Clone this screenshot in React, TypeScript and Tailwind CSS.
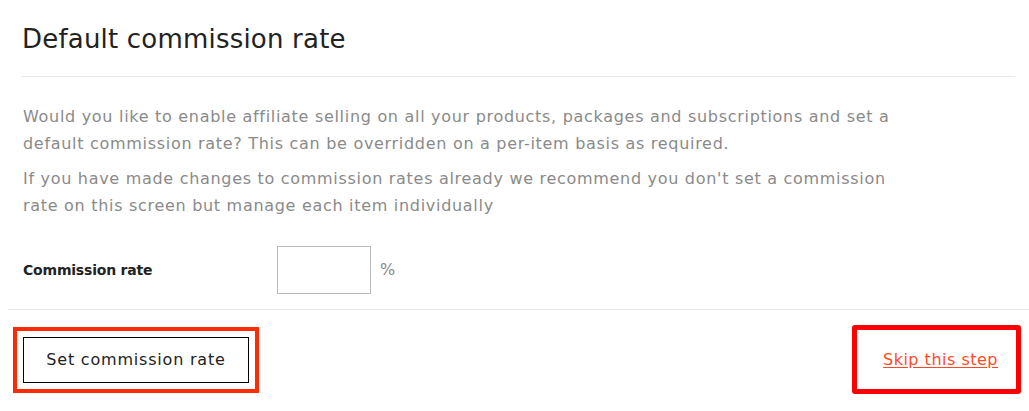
export default function App() {
  return (
    <div className="w-[1029px] h-[411px] bg-white overflow-hidden font-['DejaVu_Sans',sans-serif]">
      {/* header */}
      <div className="ml-[22px] mr-[14px] pt-[22px] pb-[20px] border-b border-[#e6e6e6]">
        <h2 className="text-[26px] leading-[34px] tracking-[0.2px] text-[#222] font-normal">Default commission rate</h2>
      </div>

      {/* body */}
      <div className="px-[23px] pt-[26px] text-[16px] leading-[27px] tracking-[0.7px] text-[#8a8a8a]">
        <p className="max-w-[880px]">
          Would you like to enable affiliate selling on all your products, packages and subscriptions and set a default commission rate? This can be overridden on a per-item basis as required.
        </p>
        <p className="mt-[8px] max-w-[880px]">
          If you have made changes to commission rates already we recommend you don't set a commission rate on this screen but manage each item individually
        </p>
      </div>

      <div className="flex items-center mt-[27px] pb-[15px] border-b border-[#e6e6e6] ml-[8px] pl-[15px]">
        <label className="w-[254px] text-[14px] font-semibold tracking-[-0.2px] text-[#222]">Commission rate</label>
        <input className="w-[94px] h-[48px] border border-[#bbb] outline-none" />
        <span className="ml-[9px] text-[16px] text-[#8a8a8a]">%</span>
      </div>

      {/* footer */}
      <div className="flex items-center justify-between pl-[13px] pr-[8px] mt-[15px]">
        <div className="border-[4px] border-[#ff2a00] p-[6px]">
          <button className="w-[226px] h-[46px] border border-black text-[16px] tracking-[0.8px] text-[#222] bg-white">
            Set commission rate
          </button>
        </div>
        <div className="w-[169px] h-[69px] border-[5px] border-[#ff0000] rounded-[3px] flex items-center justify-center">
          <a href="#" className="ml-[8px] text-[16px] tracking-[0.5px] text-[#ff4a2a] underline underline-offset-2">Skip this step</a>
        </div>
      </div>
    </div>
  );
}
